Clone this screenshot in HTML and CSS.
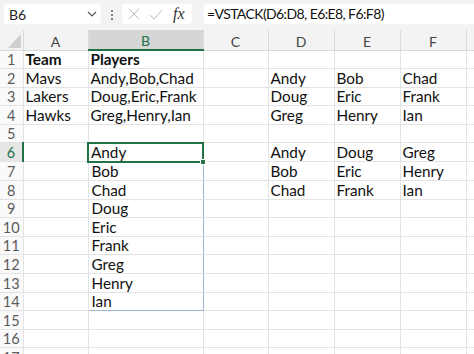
FILE: index.html
```html
<!DOCTYPE html>
<html lang="en">
<head>
    <meta charset="UTF-8">
    <title>VSTACK</title>
    <link rel="stylesheet" href="styles.css">
</head>
<body>
    <div class="toolbar">
        <div class="name-box">
            <span>B6</span>
            <svg class="chevron" width="10" height="6" viewBox="0 0 10 6"><path d="M1 1l4 4 4-4" fill="none" stroke="#555" stroke-width="1.2"/></svg>
        </div>
        <div class="dots">
            <svg width="4" height="12" viewBox="0 0 4 12"><circle cx="2" cy="2" r="1.1" fill="#666"/><circle cx="2" cy="6" r="1.1" fill="#666"/><circle cx="2" cy="10" r="1.1" fill="#666"/></svg>
        </div>
        <div class="fx-box">
            <svg width="12" height="12" viewBox="0 0 12 12"><path d="M1 1l10 10M11 1L1 11" stroke="#bbb" stroke-width="1"/></svg>
            <svg width="14" height="11" viewBox="0 0 14 11"><path d="M1 6l4 4 8-9" fill="none" stroke="#bbb" stroke-width="1"/></svg>
            <span class="fx">fx</span>
        </div>
        <div class="formula">=VSTACK(D6:D8, E6:E8, F6:F8)</div>
    </div>

    <table class="sheet">
        <colgroup>
            <col class="c-rh"><col class="c-a"><col class="c-b"><col class="c-c"><col class="c-d"><col class="c-e"><col class="c-f"><col class="c-g">
        </colgroup>
        <tr class="col-heads">
            <th class="corner"><span class="tri"></span></th>
            <th>A</th><th class="sel">B</th><th>C</th><th>D</th><th>E</th><th>F</th><th></th>
        </tr>
        <tr><th>1</th><td class="bold">Team</td><td class="bold">Players</td><td></td><td></td><td></td><td></td><td></td></tr>
        <tr><th>2</th><td>Mavs</td><td>Andy,Bob,Chad</td><td></td><td>Andy</td><td>Bob</td><td>Chad</td><td></td></tr>
        <tr><th>3</th><td>Lakers</td><td>Doug,Eric,Frank</td><td></td><td>Doug</td><td>Eric</td><td>Frank</td><td></td></tr>
        <tr><th>4</th><td>Hawks</td><td>Greg,Henry,Ian</td><td></td><td>Greg</td><td>Henry</td><td>Ian</td><td></td></tr>
        <tr><th>5</th><td></td><td></td><td></td><td></td><td></td><td></td><td></td></tr>
        <tr><th class="sel-row">6</th><td></td><td class="active">Andy<span class="handle"></span></td><td></td><td>Andy</td><td>Doug</td><td>Greg</td><td></td></tr>
        <tr><th>7</th><td></td><td class="spill">Bob</td><td></td><td>Bob</td><td>Eric</td><td>Henry</td><td></td></tr>
        <tr><th>8</th><td></td><td class="spill">Chad</td><td></td><td>Chad</td><td>Frank</td><td>Ian</td><td></td></tr>
        <tr><th>9</th><td></td><td class="spill">Doug</td><td></td><td></td><td></td><td></td><td></td></tr>
        <tr><th>10</th><td></td><td class="spill">Eric</td><td></td><td></td><td></td><td></td><td></td></tr>
        <tr><th>11</th><td></td><td class="spill">Frank</td><td></td><td></td><td></td><td></td><td></td></tr>
        <tr><th>12</th><td></td><td class="spill">Greg</td><td></td><td></td><td></td><td></td><td></td></tr>
        <tr><th>13</th><td></td><td class="spill">Henry</td><td></td><td></td><td></td><td></td><td></td></tr>
        <tr><th>14</th><td></td><td class="spill last">Ian</td><td></td><td></td><td></td><td></td><td></td></tr>
        <tr><th>15</th><td></td><td></td><td></td><td></td><td></td><td></td><td></td></tr>
        <tr><th>16</th><td></td><td></td><td></td><td></td><td></td><td></td><td></td></tr>
        <tr><th>17</th><td></td><td></td><td></td><td></td><td></td><td></td><td></td></tr>
    </table>
</body>
</html>
```

FILE: styles.css
```css
:root {
    --grid: #e3e3e3;
    --green: #217346;
    --spill: #a3b3d4;
    --head-bg: #f3f3f3;
}

* {
    margin: 0;
    padding: 0;
    box-sizing: border-box;
}

body {
    background: #fff;
    font-family: Lato, "Open Sans", sans-serif;
    color: #111;
    width: 474px;
    height: 354px;
    overflow: hidden;
}

/* formula bar */
.toolbar {
    display: flex;
    align-items: center;
    height: 30px;
    padding: 4px 0 6px 4px;
    background: var(--head-bg);
}

.name-box {
    display: flex;
    align-items: center;
    justify-content: space-between;
    width: 97px;
    height: 20px;
    padding: 0 4px 0 5px;
    background: #fff;
    border-radius: 4px;
    font-size: 14px;
    color: #222;
}

.dots {
    width: 21px;
    display: flex;
    justify-content: center;
    padding-top: 1px;
}

.fx-box {
    display: flex;
    align-items: center;
    gap: 9px;
    width: 70px;
    height: 20px;
    padding-left: 6px;
    background: #fff;
    border-radius: 4px;
}

.fx {
    font-family: "Liberation Serif", serif;
    font-style: italic;
    font-size: 16px;
    color: #333;
    margin-left: 1px;
}

.formula {
    flex: 1;
    height: 20px;
    margin-left: 12px;
    padding-left: 3px;
    background: #fff;
    border-radius: 4px 0 0 4px;
    font-size: 14px;
    letter-spacing: -0.6px;
    line-height: 20px;
    color: #111;
    white-space: nowrap;
}

/* sheet grid */
.sheet {
    border-collapse: collapse;
    table-layout: fixed;
    width: 490px;
}

.c-rh { width: 23px; }
.c-a { width: 65px; }
.c-b { width: 115px; }
.c-c { width: 65px; }
.c-d { width: 66px; }
.c-e { width: 66px; }
.c-f { width: 66px; }
.c-g { width: 28px; }

.sheet tr {
    height: 18.6px;
}

.sheet td {
    border: 1px solid var(--grid);
    padding: 0 0 0 2px;
    font-size: 15.3px;
    line-height: 17px;
    vertical-align: bottom;
    white-space: nowrap;
    overflow: hidden;
    position: relative;
}

.sheet th {
    font-weight: normal;
    font-size: 14.5px;
    color: #5a5a5a;
    background: #fafafa;
    border: 1px solid var(--grid);
    border-left: none;
    text-align: center;
    vertical-align: bottom;
    line-height: 17px;
}

.sheet tr:first-child {
    height: 20px;
}

.col-heads th {
    background: var(--head-bg);
    color: #444;
    font-size: 14px;
    border-top: none;
    border-color: #dadada;
}

.col-heads th.sel {
    background: #d6d6d6;
    color: var(--green);
    border-bottom: 2px solid var(--green);
}

.corner {
    position: relative;
}

.tri {
    position: absolute;
    right: 2px;
    bottom: 2px;
    width: 0;
    height: 0;
    border-left: 13px solid transparent;
    border-bottom: 14px solid #cfcfcf;
}

.sheet th.sel-row {
    color: var(--green);
    background: #e6e6e6;
    border-right: 2px solid var(--green);
}

.bold {
    font-weight: bold;
}

.sheet td.active {
    border: 2px solid var(--green);
    padding-left: 2px;
    overflow: visible;
}

.handle {
    position: absolute;
    right: -4px;
    bottom: -4px;
    width: 6px;
    height: 6px;
    background: var(--green);
    border: 1px solid #fff;
}

.sheet td.spill {
    border-left: 1px solid var(--spill);
    border-right: 1px solid var(--spill);
    padding-left: 3px;
}

.sheet td.spill.last {
    border-bottom: 1px solid var(--spill);
}
```
